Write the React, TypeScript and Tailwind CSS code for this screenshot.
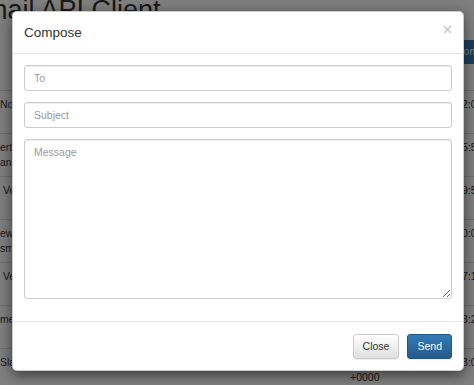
const rows = [
  { left: [["Hi, ", "Now you can read your mail"]], time: "12:05:32" },
  { left: [["Al", "ert: new sign-in on Linux"], ["Pl", "an your next trip"]], time: "15:51:08" },
  { left: [["Please", " Verify your account"]], time: "19:52:40" },
  { left: [["N", "ew message from Drive"], ["Chari", "sma and more"]], time: "20:05:17" },
  { left: [["Please", " Verify your email"]], time: "17:14:22" },
  { left: [["Welco", "me to Gmail"]], time: "13:26:51" },
  { left: [["Join ", "Slack today"]], time: "13:03:09" },
];

function BackgroundPage() {
  return (
    <div className="text-[#333]">
      <h1 className="-ml-[36px] mt-[-4px] whitespace-nowrap text-[27px] leading-[1.1]">
        Gmail API Client
      </h1>
      <div className="mt-[14px] flex">
        <button className="ml-[447px] h-[24px] shrink-0 whitespace-nowrap rounded-[3px] bg-[#337ab7] px-[9px] text-[10.5px] text-white">
          Compose
        </button>
      </div>
      <div className="mt-[26px]">
        {rows.map((row, i) => (
          <div key={i} className="flex border-t border-[#ddd] py-[6px] text-[10.5px] leading-[15px]">
            <div className="-ml-[40px] w-[390px] shrink-0">
              {row.left.map(([hidden, shown], j) => (
                <div key={j} className="flex whitespace-nowrap">
                  <span className="w-[40px] shrink-0 whitespace-pre text-right">{hidden}</span>
                  <span className="whitespace-pre">{shown}</span>
                </div>
              ))}
            </div>
            <div className="shrink-0 whitespace-nowrap">
              <div className="pl-[20px]">Mon, 11 Jan 2016 {row.time}</div>
              <div>+0000</div>
            </div>
          </div>
        ))}
      </div>
    </div>
  );
}

export default function App() {
  return (
    <div className="relative h-[385px] w-[474px] overflow-hidden bg-white font-['Liberation_Sans',Arial,sans-serif]">
      <BackgroundPage />
      <div className="absolute inset-0 bg-black/50" />
      <div className="absolute left-[12px] top-[11px] w-[452px] rounded-[5px] border border-black/20 bg-white shadow-[0_4px_14px_rgba(0,0,0,0.55)]">
        <div className="flex items-start justify-between border-b border-[#e5e5e5] p-[11px]">
          <h4 className="text-[13.5px] leading-[19px] text-[#333]">Compose</h4>
          <button className="mt-[-1px] text-[16px] font-bold leading-none text-black/20">×</button>
        </div>
        <div className="p-[11px]">
          <input
            placeholder="To"
            className="mb-[11px] block h-[26px] w-full rounded-[3px] border border-[#ccc] px-[9px] text-[10.5px] text-[#555] shadow-[inset_0_1px_1px_rgba(0,0,0,0.075)] outline-none placeholder:text-[#999]"
          />
          <input
            placeholder="Subject"
            className="mb-[11px] block h-[26px] w-full rounded-[3px] border border-[#ccc] px-[9px] text-[10.5px] text-[#555] shadow-[inset_0_1px_1px_rgba(0,0,0,0.075)] outline-none placeholder:text-[#999]"
          />
          <textarea
            placeholder="Message"
            className="mb-[11px] block h-[160px] w-full rounded-[3px] border border-[#ccc] px-[9px] py-[4.5px] text-[10.5px] leading-[15px] text-[#555] shadow-[inset_0_1px_1px_rgba(0,0,0,0.075)] outline-none placeholder:text-[#999]"
          />
        </div>
        <div className="flex justify-end gap-[8px] border-t border-[#e5e5e5] px-[11px] pb-[11px] pt-[12px]">
          <button className="h-[25px] rounded-[3px] border border-[#ccc] bg-linear-to-b from-white to-[#e0e0e0] px-[9px] text-[10.5px] text-[#333] shadow-[0_1px_1px_rgba(0,0,0,0.075)]">
            Close
          </button>
          <button className="h-[25px] rounded-[3px] border border-[#245580] bg-linear-to-b from-[#337ab7] to-[#265a88] px-[9px] text-[10.5px] text-white shadow-[0_1px_1px_rgba(0,0,0,0.075)]">
            Send
          </button>
        </div>
      </div>
    </div>
  );
}
